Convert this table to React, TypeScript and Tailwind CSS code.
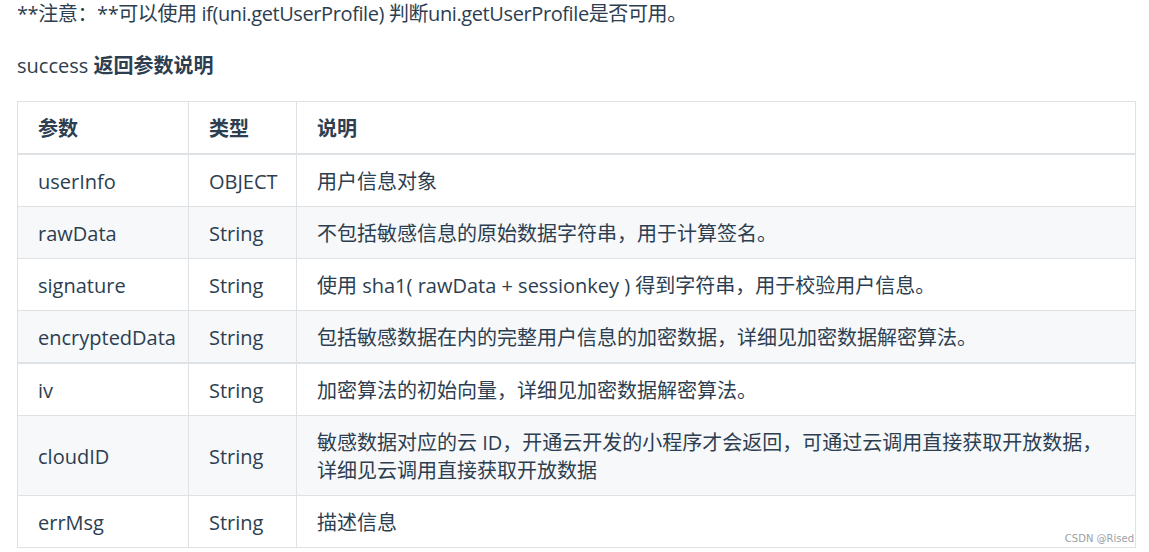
const rows = [
  { name: "userInfo", type: "OBJECT", desc: ["用户信息对象"] },
  { name: "rawData", type: "String", desc: ["不包括敏感信息的原始数据字符串，用于计算签名。"] },
  { name: "signature", type: "String", desc: ["使用 sha1( rawData + sessionkey ) 得到字符串，用于校验用户信息。"] },
  { name: "encryptedData", type: "String", desc: ["包括敏感数据在内的完整用户信息的加密数据，详细见加密数据解密算法。"] },
  { name: "iv", type: "String", desc: ["加密算法的初始向量，详细见加密数据解密算法。"] },
  {
    name: "cloudID",
    type: "String",
    desc: [
      "敏感数据对应的云 ID，开通云开发的小程序才会返回，可通过云调用直接获取开放数据，",
      "详细见云调用直接获取开放数据",
    ],
  },
  { name: "errMsg", type: "String", desc: ["描述信息"] },
];

const cell = "border border-[#dfe2e5] px-5 pt-[13px] pb-[10px] text-left align-middle whitespace-nowrap";

export default function App() {
  return (
    <div
      className="relative w-[1149px] h-[552px] overflow-hidden bg-white pl-[17px] pr-[13px] text-[20px] leading-[28px] text-[#2c3e50]"
      style={{ fontFamily: '"Open Sans", "Noto Sans CJK SC", sans-serif' }}
    >
      <p className="tracking-[-0.4px]">**注意：**可以使用 if(uni.getUserProfile) 判断uni.getUserProfile是否可用。</p>
      <p className="mt-[24px]">
        success <strong className="font-bold">返回参数说明</strong>
      </p>

      <table className="mt-[21px] w-[1119px] table-fixed border-collapse">
        <colgroup>
          <col className="w-[171px]" />
          <col className="w-[108px]" />
          <col />
        </colgroup>
        <thead>
          <tr className="bg-white">
            <th className={`${cell} border-b-2 font-bold`}>参数</th>
            <th className={`${cell} border-b-2 font-bold`}>类型</th>
            <th className={`${cell} border-b-2 font-bold`}>说明</th>
          </tr>
        </thead>
        <tbody>
          {rows.map((r, i) => (
            <tr key={r.name} className={i % 2 === 1 ? "bg-[#f6f8fa]" : "bg-white"}>
              <td className={`${cell} ${r.name === "encryptedData" ? "border-b-2" : ""}`}>{r.name}</td>
              <td className={`${cell} ${r.name === "encryptedData" ? "border-b-2" : ""}`}>{r.type}</td>
              <td className={`${cell} ${r.name === "encryptedData" ? "border-b-2" : ""}`}>
                {r.desc.map((line, j) => (
                  <span key={j}>
                    {j > 0 && <br />}
                    {line}
                  </span>
                ))}
              </td>
            </tr>
          ))}
        </tbody>
      </table>

      {/* watermark */}
      <span
        className="absolute right-[15px] bottom-[7px] text-[10px] leading-[12px] text-[#9aa0a6]"
        style={{ fontFamily: '"DejaVu Sans", sans-serif' }}
      >
        CSDN @Rised
      </span>
    </div>
  );
}
